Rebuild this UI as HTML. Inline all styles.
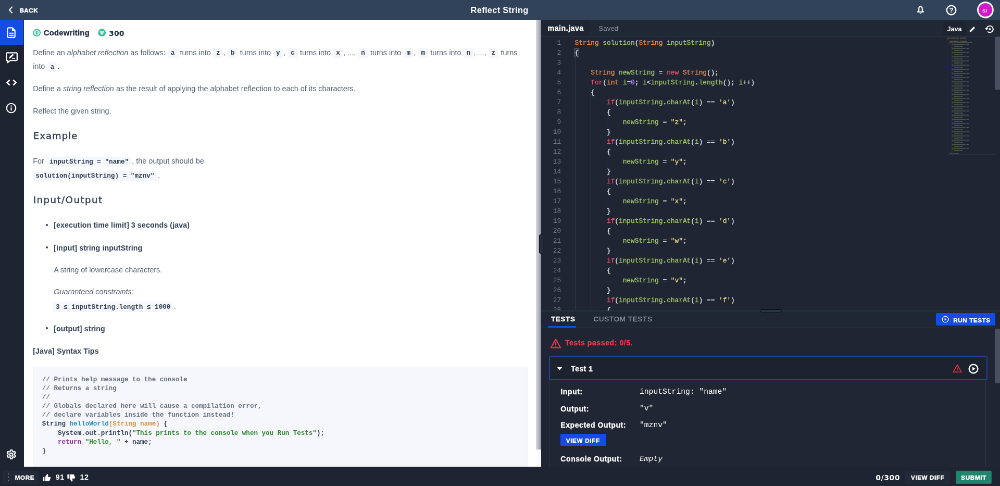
<!DOCTYPE html>
<html lang="en"><head><meta charset="utf-8"><title>Reflect String</title>
<style>
html,body{margin:0;padding:0;width:1000px;height:486px;overflow:hidden;background:#1e2532}
#root{will-change:transform;position:absolute;left:0;top:0;width:1920px;height:933px;transform:scale(0.5208333);transform-origin:0 0;font-family:"Liberation Sans",sans-serif;color:#fff;overflow:hidden;font-size:14.4px}
#root *{box-sizing:border-box}
.t{position:absolute;white-space:pre;line-height:20px;height:20px}
.b{position:absolute;display:block}
.m{font-family:"Liberation Mono",monospace}
.chip{font-family:"Liberation Mono",monospace;font-weight:bold;font-size:12.68px;color:#2f3e53;background:#f5f7fb;border-radius:3px;padding:2.4px 5.2px 1.6px;margin:0 1px}
.ed{position:absolute;white-space:pre;font-family:"Liberation Mono",monospace;font-size:12.8px;line-height:19px;height:19px;color:#dde1e7;-webkit-text-stroke:0.3px}
.ln{position:absolute;font-family:"Liberation Mono",monospace;font-size:12.8px;line-height:19px;height:19px;color:#747d8b;text-align:right;width:40px}
.ty{color:#ee8f4c}.id{color:#a3c86e}.kw{color:#f0506e}.nu{color:#ae81ff}.st{color:#e9d88a}.op{color:#dde1e7}
.cc{color:#6b7380}.ck{color:#8a2f96}.cs{color:#2e8b2e}.cf{color:#2a8fbd}.cp{color:#d9903c}
</style></head><body>
<div id="root">
<div class="b" style="left:46.08px;top:38.02px;width:983.62px;height:857.66px;background:#ffffff;"></div>
<svg class="b" style="left:62.96px;top:55.28px;" width="15.4" height="15.4" viewBox="0 0 24 24"><circle cx="12" cy="12" r="10" fill="#c9f2e3" stroke="#35c39b" stroke-width="3"/><rect x="10.200" y="6" width="3.600" height="12" rx="1.200" fill="#2eb891"/></svg>
<div class="t" style="top:53.22px;font-size:14.8px;left:83.71px;font-weight:bold;color:#232f42;letter-spacing:0.25px;-webkit-text-stroke:0.35px #232f42;">Codewriting</div>
<svg class="b" style="left:187.95px;top:55.28px;" width="15.4" height="15.4" viewBox="0 0 24 24"><circle cx="12" cy="12" r="11.5" fill="#3bbf9f"/><path d="M4.500 7.500h15l-7.500 12z" fill="#f2fdf9"/><path d="M8.800 7.500l3.200 4.800 3.200-4.800" fill="none" stroke="#3bbf9f" stroke-width="1.500"/></svg>
<div class="t" style="top:53.51px;font-size:14px;left:209.09px;font-family:'DejaVu Sans','Liberation Sans',sans-serif;font-weight:bold;color:#232f42;letter-spacing:0.1px;">300</div>
<div class="t" style="top:90.61px;font-size:14.4px;left:63.17px;color:#58626f;">Define an <i>alphabet reflection</i> as follows: <span class="chip">a</span> turns into <span class="chip">z</span>, <span class="chip">b</span> turns into <span class="chip">y</span>, <span class="chip">c</span> turns into <span class="chip">x</span>, ..., <span class="chip">n</span> turns into <span class="chip">m</span>, <span class="chip">m</span> turns into <span class="chip">n</span>, ..., <span class="chip">z</span> turns</div>
<div class="t" style="top:117.01px;font-size:14.4px;left:63.17px;color:#58626f;">into <span class="chip">a</span>.</div>
<div class="t" style="top:159.54px;font-size:14.4px;left:63.17px;color:#58626f;letter-spacing:0.02px;">Define a <i>string reflection</i> as the result of applying the alphabet reflection to each of its characters.</div>
<div class="t" style="top:202.93px;font-size:14.4px;left:63.17px;color:#58626f;">Reflect the given string.</div>
<div class="t" style="top:251.04px;font-size:18px;left:63.74px;font-family:'DejaVu Sans','Liberation Sans',sans-serif;color:#2d3b50;letter-spacing:1.1px;-webkit-text-stroke:0.4px #2d3b50;">Example</div>
<div class="t" style="top:298.93px;font-size:14.4px;left:63.17px;color:#58626f;">For <span class="chip">inputString = "name"</span>, the output should be</div>
<div class="t" style="top:326.77px;font-size:14.4px;left:62.17px;color:#58626f;"><span class="chip">solution(inputString) = "mznv"</span>.</div>
<div class="t" style="top:373.92px;font-size:18px;left:63.74px;font-family:'DejaVu Sans','Liberation Sans',sans-serif;color:#2d3b50;letter-spacing:1.55px;-webkit-text-stroke:0.4px #2d3b50;">Input/Output</div>
<div class="b" style="left:87.55px;top:429.7px;width:4.03px;height:4.03px;background:#2d3b50;border-radius:50%;"></div>
<div class="t" style="top:422.36px;font-size:14.2px;left:103.2px;font-weight:bold;color:#344256;letter-spacing:0.12px;">[execution time limit] 3 seconds (java)</div>
<div class="b" style="left:87.55px;top:472.9px;width:4.03px;height:4.03px;background:#2d3b50;border-radius:50%;"></div>
<div class="t" style="top:465.56px;font-size:14.2px;left:103.2px;font-weight:bold;color:#344256;letter-spacing:0.12px;">[input] string inputString</div>
<div class="t" style="top:507.73px;font-size:14.4px;left:103.2px;color:#58626f;">A string of lowercase characters.</div>
<div class="t" style="top:550.26px;font-size:14.4px;left:103.2px;color:#58626f;"><i>Guaranteed constraints:</i></div>
<div class="t" style="top:577.91px;font-size:14.4px;left:100.76px;color:#58626f;"><span class="chip">3 ≤ inputString.length ≤ 1000</span>.</div>
<div class="b" style="left:87.55px;top:628.42px;width:4.03px;height:4.03px;background:#2d3b50;border-radius:50%;"></div>
<div class="t" style="top:621.08px;font-size:14.2px;left:103.2px;font-weight:bold;color:#344256;letter-spacing:0.12px;">[output] string</div>
<div class="t" style="top:663.8px;font-size:14.2px;left:63.17px;font-weight:bold;color:#344256;letter-spacing:0.12px;">[Java] Syntax Tips</div>
<div class="b" style="left:62.59px;top:704.45px;width:951.55px;height:191.23px;background:#f5f7fc;border:1px solid #eceff6;border-bottom:none;"></div>
<div class="t" style="top:718.66px;font-size:12.55px;left:80.83px;font-family:'Liberation Mono',monospace;font-weight:bold;color:#33415a;"><span class="cc">// Prints help message to the console</span></div>
<div class="t" style="top:735.8px;font-size:12.55px;left:80.83px;font-family:'Liberation Mono',monospace;font-weight:bold;color:#33415a;"><span class="cc">// Returns a string</span></div>
<div class="t" style="top:752.95px;font-size:12.55px;left:80.83px;font-family:'Liberation Mono',monospace;font-weight:bold;color:#33415a;"><span class="cc">//</span></div>
<div class="t" style="top:770.09px;font-size:12.55px;left:80.83px;font-family:'Liberation Mono',monospace;font-weight:bold;color:#33415a;"><span class="cc">// Globals declared here will cause a compilation error,</span></div>
<div class="t" style="top:787.24px;font-size:12.55px;left:80.83px;font-family:'Liberation Mono',monospace;font-weight:bold;color:#33415a;"><span class="cc">// declare variables inside the function instead!</span></div>
<div class="t" style="top:804.38px;font-size:12.55px;left:80.83px;font-family:'Liberation Mono',monospace;font-weight:bold;color:#33415a;">String <span class="cf">helloWorld</span><span class="cp">(String name)</span> {</div>
<div class="t" style="top:821.53px;font-size:12.55px;left:80.83px;font-family:'Liberation Mono',monospace;font-weight:bold;color:#33415a;">    System.out.println(<span class="cs">"This prints to the console when you Run Tests"</span>);</div>
<div class="t" style="top:838.67px;font-size:12.55px;left:80.83px;font-family:'Liberation Mono',monospace;font-weight:bold;color:#33415a;">    <span class="ck">return</span> <span class="cs">"Hello, "</span> + name;</div>
<div class="t" style="top:855.82px;font-size:12.55px;left:80.83px;font-family:'Liberation Mono',monospace;font-weight:bold;color:#33415a;">}</div>
<div class="b" style="left:1038.72px;top:38.02px;width:881.28px;height:559.1px;background:#1f2532;"></div>
<div class="b" style="left:1038.72px;top:38.02px;width:881.28px;height:32.26px;background:#212835;"></div>
<div class="b" style="left:1038.72px;top:38.02px;width:96.38px;height:32.26px;background:#1f2532;border-right:1px solid #2c3544;"></div>
<div class="b" style="left:1038.72px;top:69.89px;width:881.28px;height:1.15px;background:#2d3645;"></div>
<div class="t" style="top:44.41px;font-size:14.2px;left:1051.58px;font-weight:bold;color:#fff;letter-spacing:0.5px;-webkit-text-stroke:0.3px #fff;">main.java</div>
<div class="t" style="top:44.75px;font-size:13.2px;left:1149.31px;color:#8b94a4;letter-spacing:0.1px;">Saved</div>
<div class="b" style="left:1811.14px;top:42.05px;width:43.58px;height:26.3px;background:#1d2430;border-radius:2px;"></div>
<div class="t" style="top:45.54px;font-size:12.6px;left:1818.62px;font-weight:bold;color:#fff;">Java</div>
<svg class="b" style="left:1859.82px;top:48.68px;" width="14" height="14" viewBox="0 0 14 14"><path d="M1.6 12.4l.5-2.900L9.600 2l2.400 2.400-7.500 7.500z" fill="#fff"/></svg>
<svg class="b" style="left:1890.42px;top:46.68px;" width="20" height="18" viewBox="0 0 20 18"><path d="M4.200 9a6.300 6.300 0 1 1 1.900 4.500" fill="none" stroke="#fff" stroke-width="2"/><path d="M0.800 7.200l3.400 3.800 3.400-3.800z" fill="#fff"/><circle cx="10.500" cy="9" r="1.900" fill="#fff"/></svg>
<div class="b" style="left:1038.72px;top:71.04px;width:871.68px;height:526.08px;overflow:hidden">
<div class="b" style="left:64.8px;top:20.5px;width:1px;height:532px;background:#343d4c"></div>
<div class="b" style="left:95.52px;top:96.5px;width:1px;height:456px;background:#343d4c"></div>
<div class="b" style="left:126.24px;top:153.5px;width:1px;height:19px;background:#343d4c"></div>
<div class="b" style="left:126.24px;top:229.5px;width:1px;height:19px;background:#343d4c"></div>
<div class="b" style="left:126.24px;top:305.5px;width:1px;height:19px;background:#343d4c"></div>
<div class="b" style="left:126.24px;top:381.5px;width:1px;height:19px;background:#343d4c"></div>
<div class="b" style="left:126.24px;top:457.5px;width:1px;height:19px;background:#343d4c"></div>
<div class="b" style="left:64.3px;top:21px;width:8.68px;height:18px;border:1px solid #6b7480;background:#2a3240"></div>
<div class="ln" style="left:-1.6px;top:1.5px">1</div>
<div class="ed" style="left:64.8px;top:1.5px"><span class="ty">String</span> <span class="id">solution</span>(<span class="ty">String</span> <span class="id">inputString</span>)</div>
<div class="ln" style="left:-1.6px;top:20.5px">2</div>
<div class="ed" style="left:64.8px;top:20.5px">{</div>
<div class="ln" style="left:-1.6px;top:39.5px">3</div>
<div class="ln" style="left:-1.6px;top:58.5px">4</div>
<div class="ed" style="left:64.8px;top:58.5px">    <span class="ty">String</span> <span class="id">newString</span> <span class="op">=</span> <span class="kw">new</span> <span class="ty">String</span>();</div>
<div class="ln" style="left:-1.6px;top:77.5px">5</div>
<div class="ed" style="left:64.8px;top:77.5px">    <span class="kw">for</span>(<span class="ty">int</span> <span class="id">i</span><span class="op">=</span><span class="nu">0</span>; <span class="id">i</span><span class="op">&lt;</span><span class="id">inputString</span>.<span class="id">length</span>(); <span class="id">i</span><span class="op">++</span>)</div>
<div class="ln" style="left:-1.6px;top:96.5px">6</div>
<div class="ed" style="left:64.8px;top:96.5px">    {</div>
<div class="ln" style="left:-1.6px;top:115.5px">7</div>
<div class="ed" style="left:64.8px;top:115.5px">        <span class="kw">if</span>(<span class="id">inputString</span>.<span class="id">charAt</span>(<span class="id">i</span>) <span class="op">==</span> <span class="st">'a'</span>)</div>
<div class="ln" style="left:-1.6px;top:134.5px">8</div>
<div class="ed" style="left:64.8px;top:134.5px">        {</div>
<div class="ln" style="left:-1.6px;top:153.5px">9</div>
<div class="ed" style="left:64.8px;top:153.5px">            <span class="id">newString</span> <span class="op">=</span> <span class="st">"z"</span>;</div>
<div class="ln" style="left:-1.6px;top:172.5px">10</div>
<div class="ed" style="left:64.8px;top:172.5px">        }</div>
<div class="ln" style="left:-1.6px;top:191.5px">11</div>
<div class="ed" style="left:64.8px;top:191.5px">        <span class="kw">if</span>(<span class="id">inputString</span>.<span class="id">charAt</span>(<span class="id">i</span>) <span class="op">==</span> <span class="st">'b'</span>)</div>
<div class="ln" style="left:-1.6px;top:210.5px">12</div>
<div class="ed" style="left:64.8px;top:210.5px">        {</div>
<div class="ln" style="left:-1.6px;top:229.5px">13</div>
<div class="ed" style="left:64.8px;top:229.5px">            <span class="id">newString</span> <span class="op">=</span> <span class="st">"y"</span>;</div>
<div class="ln" style="left:-1.6px;top:248.5px">14</div>
<div class="ed" style="left:64.8px;top:248.5px">        }</div>
<div class="ln" style="left:-1.6px;top:267.5px">15</div>
<div class="ed" style="left:64.8px;top:267.5px">        <span class="kw">if</span>(<span class="id">inputString</span>.<span class="id">charAt</span>(<span class="id">i</span>) <span class="op">==</span> <span class="st">'c'</span>)</div>
<div class="ln" style="left:-1.6px;top:286.5px">16</div>
<div class="ed" style="left:64.8px;top:286.5px">        {</div>
<div class="ln" style="left:-1.6px;top:305.5px">17</div>
<div class="ed" style="left:64.8px;top:305.5px">            <span class="id">newString</span> <span class="op">=</span> <span class="st">"x"</span>;</div>
<div class="ln" style="left:-1.6px;top:324.5px">18</div>
<div class="ed" style="left:64.8px;top:324.5px">        }</div>
<div class="ln" style="left:-1.6px;top:343.5px">19</div>
<div class="ed" style="left:64.8px;top:343.5px">        <span class="kw">if</span>(<span class="id">inputString</span>.<span class="id">charAt</span>(<span class="id">i</span>) <span class="op">==</span> <span class="st">'d'</span>)</div>
<div class="ln" style="left:-1.6px;top:362.5px">20</div>
<div class="ed" style="left:64.8px;top:362.5px">        {</div>
<div class="ln" style="left:-1.6px;top:381.5px">21</div>
<div class="ed" style="left:64.8px;top:381.5px">            <span class="id">newString</span> <span class="op">=</span> <span class="st">"w"</span>;</div>
<div class="ln" style="left:-1.6px;top:400.5px">22</div>
<div class="ed" style="left:64.8px;top:400.5px">        }</div>
<div class="ln" style="left:-1.6px;top:419.5px">23</div>
<div class="ed" style="left:64.8px;top:419.5px">        <span class="kw">if</span>(<span class="id">inputString</span>.<span class="id">charAt</span>(<span class="id">i</span>) <span class="op">==</span> <span class="st">'e'</span>)</div>
<div class="ln" style="left:-1.6px;top:438.5px">24</div>
<div class="ed" style="left:64.8px;top:438.5px">        {</div>
<div class="ln" style="left:-1.6px;top:457.5px">25</div>
<div class="ed" style="left:64.8px;top:457.5px">            <span class="id">newString</span> <span class="op">=</span> <span class="st">"v"</span>;</div>
<div class="ln" style="left:-1.6px;top:476.5px">26</div>
<div class="ed" style="left:64.8px;top:476.5px">        }</div>
<div class="ln" style="left:-1.6px;top:495.5px">27</div>
<div class="ed" style="left:64.8px;top:495.5px">        <span class="kw">if</span>(<span class="id">inputString</span>.<span class="id">charAt</span>(<span class="id">i</span>) <span class="op">==</span> <span class="st">'f'</span>)</div>
<div class="ln" style="left:-1.6px;top:514.5px">28</div>
<div class="ed" style="left:64.8px;top:514.5px">        {</div>
</div>
<svg class="b" style="left:1818.82px;top:71.62px;opacity:.62" width="60" height="228" viewBox="0 0 60 228"><rect x="0" y="0.4" width="6.24" height="1.3" fill="#b5793f"/><rect x="7.28" y="0.4" width="8.32" height="1.3" fill="#7f9c58"/><rect x="15.6" y="0.4" width="1.04" height="1.3" fill="#8b909a"/><rect x="16.64" y="0.4" width="6.24" height="1.3" fill="#b5793f"/><rect x="23.92" y="0.4" width="11.44" height="1.3" fill="#7f9c58"/><rect x="35.36" y="0.4" width="1.04" height="1.3" fill="#8b909a"/><rect x="0" y="2.4" width="1.04" height="1.3" fill="#8b909a"/><rect x="4.16" y="6.4" width="6.24" height="1.3" fill="#b5793f"/><rect x="11.44" y="6.4" width="9.36" height="1.3" fill="#7f9c58"/><rect x="21.84" y="6.4" width="1.04" height="1.3" fill="#8b909a"/><rect x="23.92" y="6.4" width="3.12" height="1.3" fill="#a8606a"/><rect x="28.08" y="6.4" width="6.24" height="1.3" fill="#b5793f"/><rect x="34.32" y="6.4" width="3.12" height="1.3" fill="#8b909a"/><rect x="4.16" y="8.4" width="3.12" height="1.3" fill="#a8606a"/><rect x="7.28" y="8.4" width="1.04" height="1.3" fill="#8b909a"/><rect x="8.32" y="8.4" width="3.12" height="1.3" fill="#b5793f"/><rect x="12.48" y="8.4" width="1.04" height="1.3" fill="#7f9c58"/><rect x="13.52" y="8.4" width="1.04" height="1.3" fill="#8b909a"/><rect x="14.56" y="8.4" width="1.04" height="1.3" fill="#8c6bd0"/><rect x="15.6" y="8.4" width="1.04" height="1.3" fill="#8b909a"/><rect x="17.68" y="8.4" width="1.04" height="1.3" fill="#7f9c58"/><rect x="18.72" y="8.4" width="1.04" height="1.3" fill="#8b909a"/><rect x="19.76" y="8.4" width="11.44" height="1.3" fill="#7f9c58"/><rect x="31.2" y="8.4" width="1.04" height="1.3" fill="#8b909a"/><rect x="32.24" y="8.4" width="6.24" height="1.3" fill="#7f9c58"/><rect x="38.48" y="8.4" width="3.12" height="1.3" fill="#8b909a"/><rect x="42.64" y="8.4" width="1.04" height="1.3" fill="#7f9c58"/><rect x="43.68" y="8.4" width="2.08" height="1.3" fill="#8b909a"/><rect x="45.76" y="8.4" width="1.04" height="1.3" fill="#8b909a"/><rect x="4.16" y="10.4" width="1.04" height="1.3" fill="#8b909a"/><rect x="8.32" y="12.4" width="2.08" height="1.3" fill="#a8606a"/><rect x="10.4" y="12.4" width="1.04" height="1.3" fill="#8b909a"/><rect x="11.44" y="12.4" width="11.44" height="1.3" fill="#7f9c58"/><rect x="22.88" y="12.4" width="1.04" height="1.3" fill="#8b909a"/><rect x="23.92" y="12.4" width="6.24" height="1.3" fill="#7f9c58"/><rect x="30.16" y="12.4" width="1.04" height="1.3" fill="#8b909a"/><rect x="31.2" y="12.4" width="1.04" height="1.3" fill="#7f9c58"/><rect x="32.24" y="12.4" width="1.04" height="1.3" fill="#8b909a"/><rect x="34.32" y="12.4" width="2.08" height="1.3" fill="#8b909a"/><rect x="37.44" y="12.4" width="3.12" height="1.3" fill="#a89f6a"/><rect x="40.56" y="12.4" width="1.04" height="1.3" fill="#8b909a"/><rect x="8.32" y="14.4" width="1.04" height="1.3" fill="#8b909a"/><rect x="12.48" y="16.4" width="9.36" height="1.3" fill="#7f9c58"/><rect x="22.88" y="16.4" width="1.04" height="1.3" fill="#8b909a"/><rect x="24.96" y="16.4" width="3.12" height="1.3" fill="#a89f6a"/><rect x="28.08" y="16.4" width="1.04" height="1.3" fill="#8b909a"/><rect x="8.32" y="18.4" width="1.04" height="1.3" fill="#8b909a"/><rect x="8.32" y="20.4" width="2.08" height="1.3" fill="#a8606a"/><rect x="10.4" y="20.4" width="1.04" height="1.3" fill="#8b909a"/><rect x="11.44" y="20.4" width="11.44" height="1.3" fill="#7f9c58"/><rect x="22.88" y="20.4" width="1.04" height="1.3" fill="#8b909a"/><rect x="23.92" y="20.4" width="6.24" height="1.3" fill="#7f9c58"/><rect x="30.16" y="20.4" width="1.04" height="1.3" fill="#8b909a"/><rect x="31.2" y="20.4" width="1.04" height="1.3" fill="#7f9c58"/><rect x="32.24" y="20.4" width="1.04" height="1.3" fill="#8b909a"/><rect x="34.32" y="20.4" width="2.08" height="1.3" fill="#8b909a"/><rect x="37.44" y="20.4" width="3.12" height="1.3" fill="#a89f6a"/><rect x="40.56" y="20.4" width="1.04" height="1.3" fill="#8b909a"/><rect x="8.32" y="22.4" width="1.04" height="1.3" fill="#8b909a"/><rect x="12.48" y="24.4" width="9.36" height="1.3" fill="#7f9c58"/><rect x="22.88" y="24.4" width="1.04" height="1.3" fill="#8b909a"/><rect x="24.96" y="24.4" width="3.12" height="1.3" fill="#a89f6a"/><rect x="28.08" y="24.4" width="1.04" height="1.3" fill="#8b909a"/><rect x="8.32" y="26.4" width="1.04" height="1.3" fill="#8b909a"/><rect x="8.32" y="28.4" width="2.08" height="1.3" fill="#a8606a"/><rect x="10.4" y="28.4" width="1.04" height="1.3" fill="#8b909a"/><rect x="11.44" y="28.4" width="11.44" height="1.3" fill="#7f9c58"/><rect x="22.88" y="28.4" width="1.04" height="1.3" fill="#8b909a"/><rect x="23.92" y="28.4" width="6.24" height="1.3" fill="#7f9c58"/><rect x="30.16" y="28.4" width="1.04" height="1.3" fill="#8b909a"/><rect x="31.2" y="28.4" width="1.04" height="1.3" fill="#7f9c58"/><rect x="32.24" y="28.4" width="1.04" height="1.3" fill="#8b909a"/><rect x="34.32" y="28.4" width="2.08" height="1.3" fill="#8b909a"/><rect x="37.44" y="28.4" width="3.12" height="1.3" fill="#a89f6a"/><rect x="40.56" y="28.4" width="1.04" height="1.3" fill="#8b909a"/><rect x="8.32" y="30.4" width="1.04" height="1.3" fill="#8b909a"/><rect x="12.48" y="32.4" width="9.36" height="1.3" fill="#7f9c58"/><rect x="22.88" y="32.4" width="1.04" height="1.3" fill="#8b909a"/><rect x="24.96" y="32.4" width="3.12" height="1.3" fill="#a89f6a"/><rect x="28.08" y="32.4" width="1.04" height="1.3" fill="#8b909a"/><rect x="8.32" y="34.4" width="1.04" height="1.3" fill="#8b909a"/><rect x="8.32" y="36.4" width="2.08" height="1.3" fill="#a8606a"/><rect x="10.4" y="36.4" width="1.04" height="1.3" fill="#8b909a"/><rect x="11.44" y="36.4" width="11.44" height="1.3" fill="#7f9c58"/><rect x="22.88" y="36.4" width="1.04" height="1.3" fill="#8b909a"/><rect x="23.92" y="36.4" width="6.24" height="1.3" fill="#7f9c58"/><rect x="30.16" y="36.4" width="1.04" height="1.3" fill="#8b909a"/><rect x="31.2" y="36.4" width="1.04" height="1.3" fill="#7f9c58"/><rect x="32.24" y="36.4" width="1.04" height="1.3" fill="#8b909a"/><rect x="34.32" y="36.4" width="2.08" height="1.3" fill="#8b909a"/><rect x="37.44" y="36.4" width="3.12" height="1.3" fill="#a89f6a"/><rect x="40.56" y="36.4" width="1.04" height="1.3" fill="#8b909a"/><rect x="8.32" y="38.4" width="1.04" height="1.3" fill="#8b909a"/><rect x="12.48" y="40.4" width="9.36" height="1.3" fill="#7f9c58"/><rect x="22.88" y="40.4" width="1.04" height="1.3" fill="#8b909a"/><rect x="24.96" y="40.4" width="3.12" height="1.3" fill="#a89f6a"/><rect x="28.08" y="40.4" width="1.04" height="1.3" fill="#8b909a"/><rect x="8.32" y="42.4" width="1.04" height="1.3" fill="#8b909a"/><rect x="8.32" y="44.4" width="2.08" height="1.3" fill="#a8606a"/><rect x="10.4" y="44.4" width="1.04" height="1.3" fill="#8b909a"/><rect x="11.44" y="44.4" width="11.44" height="1.3" fill="#7f9c58"/><rect x="22.88" y="44.4" width="1.04" height="1.3" fill="#8b909a"/><rect x="23.92" y="44.4" width="6.24" height="1.3" fill="#7f9c58"/><rect x="30.16" y="44.4" width="1.04" height="1.3" fill="#8b909a"/><rect x="31.2" y="44.4" width="1.04" height="1.3" fill="#7f9c58"/><rect x="32.24" y="44.4" width="1.04" height="1.3" fill="#8b909a"/><rect x="34.32" y="44.4" width="2.08" height="1.3" fill="#8b909a"/><rect x="37.44" y="44.4" width="3.12" height="1.3" fill="#a89f6a"/><rect x="40.56" y="44.4" width="1.04" height="1.3" fill="#8b909a"/><rect x="8.32" y="46.4" width="1.04" height="1.3" fill="#8b909a"/><rect x="12.48" y="48.4" width="9.36" height="1.3" fill="#7f9c58"/><rect x="22.88" y="48.4" width="1.04" height="1.3" fill="#8b909a"/><rect x="24.96" y="48.4" width="3.12" height="1.3" fill="#a89f6a"/><rect x="28.08" y="48.4" width="1.04" height="1.3" fill="#8b909a"/><rect x="8.32" y="50.4" width="1.04" height="1.3" fill="#8b909a"/><rect x="8.32" y="52.4" width="2.08" height="1.3" fill="#a8606a"/><rect x="10.4" y="52.4" width="1.04" height="1.3" fill="#8b909a"/><rect x="11.44" y="52.4" width="11.44" height="1.3" fill="#7f9c58"/><rect x="22.88" y="52.4" width="1.04" height="1.3" fill="#8b909a"/><rect x="23.92" y="52.4" width="6.24" height="1.3" fill="#7f9c58"/><rect x="30.16" y="52.4" width="1.04" height="1.3" fill="#8b909a"/><rect x="31.2" y="52.4" width="1.04" height="1.3" fill="#7f9c58"/><rect x="32.24" y="52.4" width="1.04" height="1.3" fill="#8b909a"/><rect x="34.32" y="52.4" width="2.08" height="1.3" fill="#8b909a"/><rect x="37.44" y="52.4" width="3.12" height="1.3" fill="#a89f6a"/><rect x="40.56" y="52.4" width="1.04" height="1.3" fill="#8b909a"/><rect x="8.32" y="54.4" width="1.04" height="1.3" fill="#8b909a"/><rect x="12.48" y="56.4" width="9.36" height="1.3" fill="#7f9c58"/><rect x="22.88" y="56.4" width="1.04" height="1.3" fill="#8b909a"/><rect x="24.96" y="56.4" width="3.12" height="1.3" fill="#a89f6a"/><rect x="28.08" y="56.4" width="1.04" height="1.3" fill="#8b909a"/><rect x="8.32" y="58.4" width="1.04" height="1.3" fill="#8b909a"/><rect x="8.32" y="60.4" width="2.08" height="1.3" fill="#a8606a"/><rect x="10.4" y="60.4" width="1.04" height="1.3" fill="#8b909a"/><rect x="11.44" y="60.4" width="11.44" height="1.3" fill="#7f9c58"/><rect x="22.88" y="60.4" width="1.04" height="1.3" fill="#8b909a"/><rect x="23.92" y="60.4" width="6.24" height="1.3" fill="#7f9c58"/><rect x="30.16" y="60.4" width="1.04" height="1.3" fill="#8b909a"/><rect x="31.2" y="60.4" width="1.04" height="1.3" fill="#7f9c58"/><rect x="32.24" y="60.4" width="1.04" height="1.3" fill="#8b909a"/><rect x="34.32" y="60.4" width="2.08" height="1.3" fill="#8b909a"/><rect x="37.44" y="60.4" width="3.12" height="1.3" fill="#a89f6a"/><rect x="40.56" y="60.4" width="1.04" height="1.3" fill="#8b909a"/><rect x="8.32" y="62.4" width="1.04" height="1.3" fill="#8b909a"/><rect x="12.48" y="64.4" width="9.36" height="1.3" fill="#7f9c58"/><rect x="22.88" y="64.4" width="1.04" height="1.3" fill="#8b909a"/><rect x="24.96" y="64.4" width="3.12" height="1.3" fill="#a89f6a"/><rect x="28.08" y="64.4" width="1.04" height="1.3" fill="#8b909a"/><rect x="8.32" y="66.4" width="1.04" height="1.3" fill="#8b909a"/><rect x="8.32" y="68.4" width="2.08" height="1.3" fill="#a8606a"/><rect x="10.4" y="68.4" width="1.04" height="1.3" fill="#8b909a"/><rect x="11.44" y="68.4" width="11.44" height="1.3" fill="#7f9c58"/><rect x="22.88" y="68.4" width="1.04" height="1.3" fill="#8b909a"/><rect x="23.92" y="68.4" width="6.24" height="1.3" fill="#7f9c58"/><rect x="30.16" y="68.4" width="1.04" height="1.3" fill="#8b909a"/><rect x="31.2" y="68.4" width="1.04" height="1.3" fill="#7f9c58"/><rect x="32.24" y="68.4" width="1.04" height="1.3" fill="#8b909a"/><rect x="34.32" y="68.4" width="2.08" height="1.3" fill="#8b909a"/><rect x="37.44" y="68.4" width="3.12" height="1.3" fill="#a89f6a"/><rect x="40.56" y="68.4" width="1.04" height="1.3" fill="#8b909a"/><rect x="8.32" y="70.4" width="1.04" height="1.3" fill="#8b909a"/><rect x="12.48" y="72.4" width="9.36" height="1.3" fill="#7f9c58"/><rect x="22.88" y="72.4" width="1.04" height="1.3" fill="#8b909a"/><rect x="24.96" y="72.4" width="3.12" height="1.3" fill="#a89f6a"/><rect x="28.08" y="72.4" width="1.04" height="1.3" fill="#8b909a"/><rect x="8.32" y="74.4" width="1.04" height="1.3" fill="#8b909a"/><rect x="8.32" y="76.4" width="2.08" height="1.3" fill="#a8606a"/><rect x="10.4" y="76.4" width="1.04" height="1.3" fill="#8b909a"/><rect x="11.44" y="76.4" width="11.44" height="1.3" fill="#7f9c58"/><rect x="22.88" y="76.4" width="1.04" height="1.3" fill="#8b909a"/><rect x="23.92" y="76.4" width="6.24" height="1.3" fill="#7f9c58"/><rect x="30.16" y="76.4" width="1.04" height="1.3" fill="#8b909a"/><rect x="31.2" y="76.4" width="1.04" height="1.3" fill="#7f9c58"/><rect x="32.24" y="76.4" width="1.04" height="1.3" fill="#8b909a"/><rect x="34.32" y="76.4" width="2.08" height="1.3" fill="#8b909a"/><rect x="37.44" y="76.4" width="3.12" height="1.3" fill="#a89f6a"/><rect x="40.56" y="76.4" width="1.04" height="1.3" fill="#8b909a"/><rect x="8.32" y="78.4" width="1.04" height="1.3" fill="#8b909a"/><rect x="12.48" y="80.4" width="9.36" height="1.3" fill="#7f9c58"/><rect x="22.88" y="80.4" width="1.04" height="1.3" fill="#8b909a"/><rect x="24.96" y="80.4" width="3.12" height="1.3" fill="#a89f6a"/><rect x="28.08" y="80.4" width="1.04" height="1.3" fill="#8b909a"/><rect x="8.32" y="82.4" width="1.04" height="1.3" fill="#8b909a"/><rect x="8.32" y="84.4" width="2.08" height="1.3" fill="#a8606a"/><rect x="10.4" y="84.4" width="1.04" height="1.3" fill="#8b909a"/><rect x="11.44" y="84.4" width="11.44" height="1.3" fill="#7f9c58"/><rect x="22.88" y="84.4" width="1.04" height="1.3" fill="#8b909a"/><rect x="23.92" y="84.4" width="6.24" height="1.3" fill="#7f9c58"/><rect x="30.16" y="84.4" width="1.04" height="1.3" fill="#8b909a"/><rect x="31.2" y="84.4" width="1.04" height="1.3" fill="#7f9c58"/><rect x="32.24" y="84.4" width="1.04" height="1.3" fill="#8b909a"/><rect x="34.32" y="84.4" width="2.08" height="1.3" fill="#8b909a"/><rect x="37.44" y="84.4" width="3.12" height="1.3" fill="#a89f6a"/><rect x="40.56" y="84.4" width="1.04" height="1.3" fill="#8b909a"/><rect x="8.32" y="86.4" width="1.04" height="1.3" fill="#8b909a"/><rect x="12.48" y="88.4" width="9.36" height="1.3" fill="#7f9c58"/><rect x="22.88" y="88.4" width="1.04" height="1.3" fill="#8b909a"/><rect x="24.96" y="88.4" width="3.12" height="1.3" fill="#a89f6a"/><rect x="28.08" y="88.4" width="1.04" height="1.3" fill="#8b909a"/><rect x="8.32" y="90.4" width="1.04" height="1.3" fill="#8b909a"/><rect x="8.32" y="92.4" width="2.08" height="1.3" fill="#a8606a"/><rect x="10.4" y="92.4" width="1.04" height="1.3" fill="#8b909a"/><rect x="11.44" y="92.4" width="11.44" height="1.3" fill="#7f9c58"/><rect x="22.88" y="92.4" width="1.04" height="1.3" fill="#8b909a"/><rect x="23.92" y="92.4" width="6.24" height="1.3" fill="#7f9c58"/><rect x="30.16" y="92.4" width="1.04" height="1.3" fill="#8b909a"/><rect x="31.2" y="92.4" width="1.04" height="1.3" fill="#7f9c58"/><rect x="32.24" y="92.4" width="1.04" height="1.3" fill="#8b909a"/><rect x="34.32" y="92.4" width="2.08" height="1.3" fill="#8b909a"/><rect x="37.44" y="92.4" width="3.12" height="1.3" fill="#a89f6a"/><rect x="40.56" y="92.4" width="1.04" height="1.3" fill="#8b909a"/><rect x="8.32" y="94.4" width="1.04" height="1.3" fill="#8b909a"/><rect x="12.48" y="96.4" width="9.36" height="1.3" fill="#7f9c58"/><rect x="22.88" y="96.4" width="1.04" height="1.3" fill="#8b909a"/><rect x="24.96" y="96.4" width="3.12" height="1.3" fill="#a89f6a"/><rect x="28.08" y="96.4" width="1.04" height="1.3" fill="#8b909a"/><rect x="8.32" y="98.4" width="1.04" height="1.3" fill="#8b909a"/><rect x="8.32" y="100.4" width="2.08" height="1.3" fill="#a8606a"/><rect x="10.4" y="100.4" width="1.04" height="1.3" fill="#8b909a"/><rect x="11.44" y="100.4" width="11.44" height="1.3" fill="#7f9c58"/><rect x="22.88" y="100.4" width="1.04" height="1.3" fill="#8b909a"/><rect x="23.92" y="100.4" width="6.24" height="1.3" fill="#7f9c58"/><rect x="30.16" y="100.4" width="1.04" height="1.3" fill="#8b909a"/><rect x="31.2" y="100.4" width="1.04" height="1.3" fill="#7f9c58"/><rect x="32.24" y="100.4" width="1.04" height="1.3" fill="#8b909a"/><rect x="34.32" y="100.4" width="2.08" height="1.3" fill="#8b909a"/><rect x="37.44" y="100.4" width="3.12" height="1.3" fill="#a89f6a"/><rect x="40.56" y="100.4" width="1.04" height="1.3" fill="#8b909a"/><rect x="8.32" y="102.4" width="1.04" height="1.3" fill="#8b909a"/><rect x="12.48" y="104.4" width="9.36" height="1.3" fill="#7f9c58"/><rect x="22.88" y="104.4" width="1.04" height="1.3" fill="#8b909a"/><rect x="24.96" y="104.4" width="3.12" height="1.3" fill="#a89f6a"/><rect x="28.08" y="104.4" width="1.04" height="1.3" fill="#8b909a"/><rect x="8.32" y="106.4" width="1.04" height="1.3" fill="#8b909a"/><rect x="8.32" y="108.4" width="2.08" height="1.3" fill="#a8606a"/><rect x="10.4" y="108.4" width="1.04" height="1.3" fill="#8b909a"/><rect x="11.44" y="108.4" width="11.44" height="1.3" fill="#7f9c58"/><rect x="22.88" y="108.4" width="1.04" height="1.3" fill="#8b909a"/><rect x="23.92" y="108.4" width="6.24" height="1.3" fill="#7f9c58"/><rect x="30.16" y="108.4" width="1.04" height="1.3" fill="#8b909a"/><rect x="31.2" y="108.4" width="1.04" height="1.3" fill="#7f9c58"/><rect x="32.24" y="108.4" width="1.04" height="1.3" fill="#8b909a"/><rect x="34.32" y="108.4" width="2.08" height="1.3" fill="#8b909a"/><rect x="37.44" y="108.4" width="3.12" height="1.3" fill="#a89f6a"/><rect x="40.56" y="108.4" width="1.04" height="1.3" fill="#8b909a"/><rect x="8.32" y="110.4" width="1.04" height="1.3" fill="#8b909a"/><rect x="12.48" y="112.4" width="9.36" height="1.3" fill="#7f9c58"/><rect x="22.88" y="112.4" width="1.04" height="1.3" fill="#8b909a"/><rect x="24.96" y="112.4" width="3.12" height="1.3" fill="#a89f6a"/><rect x="28.08" y="112.4" width="1.04" height="1.3" fill="#8b909a"/><rect x="8.32" y="114.4" width="1.04" height="1.3" fill="#8b909a"/><rect x="8.32" y="116.4" width="2.08" height="1.3" fill="#a8606a"/><rect x="10.4" y="116.4" width="1.04" height="1.3" fill="#8b909a"/><rect x="11.44" y="116.4" width="11.44" height="1.3" fill="#7f9c58"/><rect x="22.88" y="116.4" width="1.04" height="1.3" fill="#8b909a"/><rect x="23.92" y="116.4" width="6.24" height="1.3" fill="#7f9c58"/><rect x="30.16" y="116.4" width="1.04" height="1.3" fill="#8b909a"/><rect x="31.2" y="116.4" width="1.04" height="1.3" fill="#7f9c58"/><rect x="32.24" y="116.4" width="1.04" height="1.3" fill="#8b909a"/><rect x="34.32" y="116.4" width="2.08" height="1.3" fill="#8b909a"/><rect x="37.44" y="116.4" width="3.12" height="1.3" fill="#a89f6a"/><rect x="40.56" y="116.4" width="1.04" height="1.3" fill="#8b909a"/><rect x="8.32" y="118.4" width="1.04" height="1.3" fill="#8b909a"/><rect x="12.48" y="120.4" width="9.36" height="1.3" fill="#7f9c58"/><rect x="22.88" y="120.4" width="1.04" height="1.3" fill="#8b909a"/><rect x="24.96" y="120.4" width="3.12" height="1.3" fill="#a89f6a"/><rect x="28.08" y="120.4" width="1.04" height="1.3" fill="#8b909a"/><rect x="8.32" y="122.4" width="1.04" height="1.3" fill="#8b909a"/><rect x="8.32" y="124.4" width="2.08" height="1.3" fill="#a8606a"/><rect x="10.4" y="124.4" width="1.04" height="1.3" fill="#8b909a"/><rect x="11.44" y="124.4" width="11.44" height="1.3" fill="#7f9c58"/><rect x="22.88" y="124.4" width="1.04" height="1.3" fill="#8b909a"/><rect x="23.92" y="124.4" width="6.24" height="1.3" fill="#7f9c58"/><rect x="30.16" y="124.4" width="1.04" height="1.3" fill="#8b909a"/><rect x="31.2" y="124.4" width="1.04" height="1.3" fill="#7f9c58"/><rect x="32.24" y="124.4" width="1.04" height="1.3" fill="#8b909a"/><rect x="34.32" y="124.4" width="2.08" height="1.3" fill="#8b909a"/><rect x="37.44" y="124.4" width="3.12" height="1.3" fill="#a89f6a"/><rect x="40.56" y="124.4" width="1.04" height="1.3" fill="#8b909a"/><rect x="8.32" y="126.4" width="1.04" height="1.3" fill="#8b909a"/><rect x="12.48" y="128.4" width="9.36" height="1.3" fill="#7f9c58"/><rect x="22.88" y="128.4" width="1.04" height="1.3" fill="#8b909a"/><rect x="24.96" y="128.4" width="3.12" height="1.3" fill="#a89f6a"/><rect x="28.08" y="128.4" width="1.04" height="1.3" fill="#8b909a"/><rect x="8.32" y="130.4" width="1.04" height="1.3" fill="#8b909a"/><rect x="8.32" y="132.4" width="2.08" height="1.3" fill="#a8606a"/><rect x="10.4" y="132.4" width="1.04" height="1.3" fill="#8b909a"/><rect x="11.44" y="132.4" width="11.44" height="1.3" fill="#7f9c58"/><rect x="22.88" y="132.4" width="1.04" height="1.3" fill="#8b909a"/><rect x="23.92" y="132.4" width="6.24" height="1.3" fill="#7f9c58"/><rect x="30.16" y="132.4" width="1.04" height="1.3" fill="#8b909a"/><rect x="31.2" y="132.4" width="1.04" height="1.3" fill="#7f9c58"/><rect x="32.24" y="132.4" width="1.04" height="1.3" fill="#8b909a"/><rect x="34.32" y="132.4" width="2.08" height="1.3" fill="#8b909a"/><rect x="37.44" y="132.4" width="3.12" height="1.3" fill="#a89f6a"/><rect x="40.56" y="132.4" width="1.04" height="1.3" fill="#8b909a"/><rect x="8.32" y="134.4" width="1.04" height="1.3" fill="#8b909a"/><rect x="12.48" y="136.4" width="9.36" height="1.3" fill="#7f9c58"/><rect x="22.88" y="136.4" width="1.04" height="1.3" fill="#8b909a"/><rect x="24.96" y="136.4" width="3.12" height="1.3" fill="#a89f6a"/><rect x="28.08" y="136.4" width="1.04" height="1.3" fill="#8b909a"/><rect x="8.32" y="138.4" width="1.04" height="1.3" fill="#8b909a"/><rect x="8.32" y="140.4" width="2.08" height="1.3" fill="#a8606a"/><rect x="10.4" y="140.4" width="1.04" height="1.3" fill="#8b909a"/><rect x="11.44" y="140.4" width="11.44" height="1.3" fill="#7f9c58"/><rect x="22.88" y="140.4" width="1.04" height="1.3" fill="#8b909a"/><rect x="23.92" y="140.4" width="6.24" height="1.3" fill="#7f9c58"/><rect x="30.16" y="140.4" width="1.04" height="1.3" fill="#8b909a"/><rect x="31.2" y="140.4" width="1.04" height="1.3" fill="#7f9c58"/><rect x="32.24" y="140.4" width="1.04" height="1.3" fill="#8b909a"/><rect x="34.32" y="140.4" width="2.08" height="1.3" fill="#8b909a"/><rect x="37.44" y="140.4" width="3.12" height="1.3" fill="#a89f6a"/><rect x="40.56" y="140.4" width="1.04" height="1.3" fill="#8b909a"/><rect x="8.32" y="142.4" width="1.04" height="1.3" fill="#8b909a"/><rect x="12.48" y="144.4" width="9.36" height="1.3" fill="#7f9c58"/><rect x="22.88" y="144.4" width="1.04" height="1.3" fill="#8b909a"/><rect x="24.96" y="144.4" width="3.12" height="1.3" fill="#a89f6a"/><rect x="28.08" y="144.4" width="1.04" height="1.3" fill="#8b909a"/><rect x="8.32" y="146.4" width="1.04" height="1.3" fill="#8b909a"/><rect x="8.32" y="148.4" width="2.08" height="1.3" fill="#a8606a"/><rect x="10.4" y="148.4" width="1.04" height="1.3" fill="#8b909a"/><rect x="11.44" y="148.4" width="11.44" height="1.3" fill="#7f9c58"/><rect x="22.88" y="148.4" width="1.04" height="1.3" fill="#8b909a"/><rect x="23.92" y="148.4" width="6.24" height="1.3" fill="#7f9c58"/><rect x="30.16" y="148.4" width="1.04" height="1.3" fill="#8b909a"/><rect x="31.2" y="148.4" width="1.04" height="1.3" fill="#7f9c58"/><rect x="32.24" y="148.4" width="1.04" height="1.3" fill="#8b909a"/><rect x="34.32" y="148.4" width="2.08" height="1.3" fill="#8b909a"/><rect x="37.44" y="148.4" width="3.12" height="1.3" fill="#a89f6a"/><rect x="40.56" y="148.4" width="1.04" height="1.3" fill="#8b909a"/><rect x="8.32" y="150.4" width="1.04" height="1.3" fill="#8b909a"/><rect x="12.48" y="152.4" width="9.36" height="1.3" fill="#7f9c58"/><rect x="22.88" y="152.4" width="1.04" height="1.3" fill="#8b909a"/><rect x="24.96" y="152.4" width="3.12" height="1.3" fill="#a89f6a"/><rect x="28.08" y="152.4" width="1.04" height="1.3" fill="#8b909a"/><rect x="8.32" y="154.4" width="1.04" height="1.3" fill="#8b909a"/><rect x="8.32" y="156.4" width="2.08" height="1.3" fill="#a8606a"/><rect x="10.4" y="156.4" width="1.04" height="1.3" fill="#8b909a"/><rect x="11.44" y="156.4" width="11.44" height="1.3" fill="#7f9c58"/><rect x="22.88" y="156.4" width="1.04" height="1.3" fill="#8b909a"/><rect x="23.92" y="156.4" width="6.24" height="1.3" fill="#7f9c58"/><rect x="30.16" y="156.4" width="1.04" height="1.3" fill="#8b909a"/><rect x="31.2" y="156.4" width="1.04" height="1.3" fill="#7f9c58"/><rect x="32.24" y="156.4" width="1.04" height="1.3" fill="#8b909a"/><rect x="34.32" y="156.4" width="2.08" height="1.3" fill="#8b909a"/><rect x="37.44" y="156.4" width="3.12" height="1.3" fill="#a89f6a"/><rect x="40.56" y="156.4" width="1.04" height="1.3" fill="#8b909a"/><rect x="8.32" y="158.4" width="1.04" height="1.3" fill="#8b909a"/><rect x="12.48" y="160.4" width="9.36" height="1.3" fill="#7f9c58"/><rect x="22.88" y="160.4" width="1.04" height="1.3" fill="#8b909a"/><rect x="24.96" y="160.4" width="3.12" height="1.3" fill="#a89f6a"/><rect x="28.08" y="160.4" width="1.04" height="1.3" fill="#8b909a"/><rect x="8.32" y="162.4" width="1.04" height="1.3" fill="#8b909a"/><rect x="8.32" y="164.4" width="2.08" height="1.3" fill="#a8606a"/><rect x="10.4" y="164.4" width="1.04" height="1.3" fill="#8b909a"/><rect x="11.44" y="164.4" width="11.44" height="1.3" fill="#7f9c58"/><rect x="22.88" y="164.4" width="1.04" height="1.3" fill="#8b909a"/><rect x="23.92" y="164.4" width="6.24" height="1.3" fill="#7f9c58"/><rect x="30.16" y="164.4" width="1.04" height="1.3" fill="#8b909a"/><rect x="31.2" y="164.4" width="1.04" height="1.3" fill="#7f9c58"/><rect x="32.24" y="164.4" width="1.04" height="1.3" fill="#8b909a"/><rect x="34.32" y="164.4" width="2.08" height="1.3" fill="#8b909a"/><rect x="37.44" y="164.4" width="3.12" height="1.3" fill="#a89f6a"/><rect x="40.56" y="164.4" width="1.04" height="1.3" fill="#8b909a"/><rect x="8.32" y="166.4" width="1.04" height="1.3" fill="#8b909a"/><rect x="12.48" y="168.4" width="9.36" height="1.3" fill="#7f9c58"/><rect x="22.88" y="168.4" width="1.04" height="1.3" fill="#8b909a"/><rect x="24.96" y="168.4" width="3.12" height="1.3" fill="#a89f6a"/><rect x="28.08" y="168.4" width="1.04" height="1.3" fill="#8b909a"/><rect x="8.32" y="170.4" width="1.04" height="1.3" fill="#8b909a"/><rect x="8.32" y="172.4" width="2.08" height="1.3" fill="#a8606a"/><rect x="10.4" y="172.4" width="1.04" height="1.3" fill="#8b909a"/><rect x="11.44" y="172.4" width="11.44" height="1.3" fill="#7f9c58"/><rect x="22.88" y="172.4" width="1.04" height="1.3" fill="#8b909a"/><rect x="23.92" y="172.4" width="6.24" height="1.3" fill="#7f9c58"/><rect x="30.16" y="172.4" width="1.04" height="1.3" fill="#8b909a"/><rect x="31.2" y="172.4" width="1.04" height="1.3" fill="#7f9c58"/><rect x="32.24" y="172.4" width="1.04" height="1.3" fill="#8b909a"/><rect x="34.32" y="172.4" width="2.08" height="1.3" fill="#8b909a"/><rect x="37.44" y="172.4" width="3.12" height="1.3" fill="#a89f6a"/><rect x="40.56" y="172.4" width="1.04" height="1.3" fill="#8b909a"/><rect x="8.32" y="174.4" width="1.04" height="1.3" fill="#8b909a"/><rect x="12.48" y="176.4" width="9.36" height="1.3" fill="#7f9c58"/><rect x="22.88" y="176.4" width="1.04" height="1.3" fill="#8b909a"/><rect x="24.96" y="176.4" width="3.12" height="1.3" fill="#a89f6a"/><rect x="28.08" y="176.4" width="1.04" height="1.3" fill="#8b909a"/><rect x="8.32" y="178.4" width="1.04" height="1.3" fill="#8b909a"/><rect x="8.32" y="180.4" width="2.08" height="1.3" fill="#a8606a"/><rect x="10.4" y="180.4" width="1.04" height="1.3" fill="#8b909a"/><rect x="11.44" y="180.4" width="11.44" height="1.3" fill="#7f9c58"/><rect x="22.88" y="180.4" width="1.04" height="1.3" fill="#8b909a"/><rect x="23.92" y="180.4" width="6.24" height="1.3" fill="#7f9c58"/><rect x="30.16" y="180.4" width="1.04" height="1.3" fill="#8b909a"/><rect x="31.2" y="180.4" width="1.04" height="1.3" fill="#7f9c58"/><rect x="32.24" y="180.4" width="1.04" height="1.3" fill="#8b909a"/><rect x="34.32" y="180.4" width="2.08" height="1.3" fill="#8b909a"/><rect x="37.44" y="180.4" width="3.12" height="1.3" fill="#a89f6a"/><rect x="40.56" y="180.4" width="1.04" height="1.3" fill="#8b909a"/><rect x="8.32" y="182.4" width="1.04" height="1.3" fill="#8b909a"/><rect x="12.48" y="184.4" width="9.36" height="1.3" fill="#7f9c58"/><rect x="22.88" y="184.4" width="1.04" height="1.3" fill="#8b909a"/><rect x="24.96" y="184.4" width="3.12" height="1.3" fill="#a89f6a"/><rect x="28.08" y="184.4" width="1.04" height="1.3" fill="#8b909a"/><rect x="8.32" y="186.4" width="1.04" height="1.3" fill="#8b909a"/><rect x="8.32" y="188.4" width="2.08" height="1.3" fill="#a8606a"/><rect x="10.4" y="188.4" width="1.04" height="1.3" fill="#8b909a"/><rect x="11.44" y="188.4" width="11.44" height="1.3" fill="#7f9c58"/><rect x="22.88" y="188.4" width="1.04" height="1.3" fill="#8b909a"/><rect x="23.92" y="188.4" width="6.24" height="1.3" fill="#7f9c58"/><rect x="30.16" y="188.4" width="1.04" height="1.3" fill="#8b909a"/><rect x="31.2" y="188.4" width="1.04" height="1.3" fill="#7f9c58"/><rect x="32.24" y="188.4" width="1.04" height="1.3" fill="#8b909a"/><rect x="34.32" y="188.4" width="2.08" height="1.3" fill="#8b909a"/><rect x="37.44" y="188.4" width="3.12" height="1.3" fill="#a89f6a"/><rect x="40.56" y="188.4" width="1.04" height="1.3" fill="#8b909a"/><rect x="8.32" y="190.4" width="1.04" height="1.3" fill="#8b909a"/><rect x="12.48" y="192.4" width="9.36" height="1.3" fill="#7f9c58"/><rect x="22.88" y="192.4" width="1.04" height="1.3" fill="#8b909a"/><rect x="24.96" y="192.4" width="3.12" height="1.3" fill="#a89f6a"/><rect x="28.08" y="192.4" width="1.04" height="1.3" fill="#8b909a"/><rect x="8.32" y="194.4" width="1.04" height="1.3" fill="#8b909a"/><rect x="8.32" y="196.4" width="2.08" height="1.3" fill="#a8606a"/><rect x="10.4" y="196.4" width="1.04" height="1.3" fill="#8b909a"/><rect x="11.44" y="196.4" width="11.44" height="1.3" fill="#7f9c58"/><rect x="22.88" y="196.4" width="1.04" height="1.3" fill="#8b909a"/><rect x="23.92" y="196.4" width="6.24" height="1.3" fill="#7f9c58"/><rect x="30.16" y="196.4" width="1.04" height="1.3" fill="#8b909a"/><rect x="31.2" y="196.4" width="1.04" height="1.3" fill="#7f9c58"/><rect x="32.24" y="196.4" width="1.04" height="1.3" fill="#8b909a"/><rect x="34.32" y="196.4" width="2.08" height="1.3" fill="#8b909a"/><rect x="37.44" y="196.4" width="3.12" height="1.3" fill="#a89f6a"/><rect x="40.56" y="196.4" width="1.04" height="1.3" fill="#8b909a"/><rect x="8.32" y="198.4" width="1.04" height="1.3" fill="#8b909a"/><rect x="12.48" y="200.4" width="9.36" height="1.3" fill="#7f9c58"/><rect x="22.88" y="200.4" width="1.04" height="1.3" fill="#8b909a"/><rect x="24.96" y="200.4" width="3.12" height="1.3" fill="#a89f6a"/><rect x="28.08" y="200.4" width="1.04" height="1.3" fill="#8b909a"/><rect x="8.32" y="202.4" width="1.04" height="1.3" fill="#8b909a"/><rect x="8.32" y="204.4" width="2.08" height="1.3" fill="#a8606a"/><rect x="10.4" y="204.4" width="1.04" height="1.3" fill="#8b909a"/><rect x="11.44" y="204.4" width="11.44" height="1.3" fill="#7f9c58"/><rect x="22.88" y="204.4" width="1.04" height="1.3" fill="#8b909a"/><rect x="23.92" y="204.4" width="6.24" height="1.3" fill="#7f9c58"/><rect x="30.16" y="204.4" width="1.04" height="1.3" fill="#8b909a"/><rect x="31.2" y="204.4" width="1.04" height="1.3" fill="#7f9c58"/><rect x="32.24" y="204.4" width="1.04" height="1.3" fill="#8b909a"/><rect x="34.32" y="204.4" width="2.08" height="1.3" fill="#8b909a"/><rect x="37.44" y="204.4" width="3.12" height="1.3" fill="#a89f6a"/><rect x="40.56" y="204.4" width="1.04" height="1.3" fill="#8b909a"/><rect x="8.32" y="206.4" width="1.04" height="1.3" fill="#8b909a"/><rect x="12.48" y="208.4" width="9.36" height="1.3" fill="#7f9c58"/><rect x="22.88" y="208.4" width="1.04" height="1.3" fill="#8b909a"/><rect x="24.96" y="208.4" width="3.12" height="1.3" fill="#a89f6a"/><rect x="28.08" y="208.4" width="1.04" height="1.3" fill="#8b909a"/><rect x="8.32" y="210.4" width="1.04" height="1.3" fill="#8b909a"/><rect x="8.32" y="212.4" width="2.08" height="1.3" fill="#a8606a"/><rect x="10.4" y="212.4" width="1.04" height="1.3" fill="#8b909a"/><rect x="11.44" y="212.4" width="11.44" height="1.3" fill="#7f9c58"/><rect x="22.88" y="212.4" width="1.04" height="1.3" fill="#8b909a"/><rect x="23.92" y="212.4" width="6.24" height="1.3" fill="#7f9c58"/><rect x="30.16" y="212.4" width="1.04" height="1.3" fill="#8b909a"/><rect x="31.2" y="212.4" width="1.04" height="1.3" fill="#7f9c58"/><rect x="32.24" y="212.4" width="1.04" height="1.3" fill="#8b909a"/><rect x="34.32" y="212.4" width="2.08" height="1.3" fill="#8b909a"/><rect x="37.44" y="212.4" width="3.12" height="1.3" fill="#a89f6a"/><rect x="40.56" y="212.4" width="1.04" height="1.3" fill="#8b909a"/><rect x="8.32" y="214.4" width="1.04" height="1.3" fill="#8b909a"/><rect x="12.48" y="216.4" width="9.36" height="1.3" fill="#7f9c58"/><rect x="22.88" y="216.4" width="1.04" height="1.3" fill="#8b909a"/><rect x="24.96" y="216.4" width="3.12" height="1.3" fill="#a89f6a"/><rect x="28.08" y="216.4" width="1.04" height="1.3" fill="#8b909a"/><rect x="8.32" y="218.4" width="1.04" height="1.3" fill="#8b909a"/><rect x="4.16" y="220.4" width="1.04" height="1.3" fill="#8b909a"/><rect x="4.16" y="222.4" width="6.24" height="1.3" fill="#a8606a"/><rect x="11.44" y="222.4" width="9.36" height="1.3" fill="#7f9c58"/><rect x="20.8" y="222.4" width="1.04" height="1.3" fill="#8b909a"/><rect x="0" y="224.4" width="1.04" height="1.3" fill="#8b909a"/></svg>
<div class="b" style="left:1910.4px;top:71.04px;width:9.6px;height:101.38px;background:#485060;"></div>
<div class="b" style="left:1818.24px;top:296.06px;width:91.39px;height:1.15px;background:#2a3341;"></div>
<div class="b" style="left:1038.72px;top:595.97px;width:881.28px;height:299.71px;background:#1f2532;"></div>
<div class="b" style="left:1038.72px;top:595.97px;width:869.76px;height:33.02px;background:#202734;"></div>
<div class="b" style="left:1038.72px;top:596.35px;width:881.28px;height:1.54px;background:#2b3443;"></div>
<div class="b" style="left:1460.16px;top:594.24px;width:41.28px;height:5.76px;background:#2a3340;border:1.6px solid #0e1219;border-radius:3px;"></div>
<div class="b" style="left:1038.72px;top:628.99px;width:869.76px;height:1.15px;background:#2d3645;"></div>
<div class="t" style="top:603.4px;font-size:13.4px;left:1057.92px;font-weight:bold;color:#fff;letter-spacing:0.7px;-webkit-text-stroke:0.35px #fff;">TESTS</div>
<div class="b" style="left:1051.78px;top:625.92px;width:54.72px;height:2.69px;background:#144de4;"></div>
<div class="t" style="top:603.4px;font-size:13.4px;left:1139.52px;color:#8e97a8;letter-spacing:0.72px;-webkit-text-stroke:0.3px #8e97a8;">CUSTOM TESTS</div>
<div class="b" style="left:1796.74px;top:601.34px;width:114.24px;height:23.81px;background:#144de4;border-radius:2px;"></div>
<svg class="b" style="left:1807.78px;top:606.25px;" width="14" height="14" viewBox="0 0 24 24"><circle cx="12" cy="12" r="10" fill="none" stroke="#fff" stroke-width="2.4"/><path d="M9.800 7.600l6.600 4.400-6.600 4.400z" fill="#fff"/></svg>
<div class="t" style="top:605.37px;font-size:11.6px;left:1830.34px;font-weight:bold;color:#fff;letter-spacing:0.62px;-webkit-text-stroke:0.4px #fff;">RUN TESTS</div>
<div class="b" style="left:1907.71px;top:630.14px;width:1.15px;height:265.54px;background:#2b3443;"></div>
<div class="b" style="left:1909.63px;top:630.53px;width:10.37px;height:105.22px;background:#485060;"></div>
<svg class="b" style="left:1055.75px;top:648.94px;" width="22" height="20" viewBox="0 0 24 22"><path d="M12 2.600L22 20.400H2z" fill="none" stroke="#f2354e" stroke-width="2.300" stroke-linejoin="round"/><path d="M12 9v5.600" stroke="#f2354e" stroke-width="2.200"/><circle cx="12" cy="17.300" r="1.250" fill="#f2354e"/></svg>
<div class="t" style="top:647.55px;font-size:14px;left:1084.8px;font-weight:bold;color:#f2354e;letter-spacing:0.6px;-webkit-text-stroke:0.3px #f2354e;">Tests passed: 0/5.</div>
<div class="b" style="left:1054.46px;top:684.29px;width:841.73px;height:45.31px;background:#1d232e;border:2px solid #27409f;border-radius:2px;"></div>
<svg class="b" style="left:1068.93px;top:704.21px;" width="11" height="7" viewBox="0 0 11 7"><path d="M0.500 0.800h10l-5 5.600z" fill="#fff"/></svg>
<div class="t" style="top:698.43px;font-size:14px;left:1096.32px;font-weight:bold;color:#fff;letter-spacing:0.4px;-webkit-text-stroke:0.3px #fff;">Test 1</div>
<svg class="b" style="left:1827.82px;top:698.33px;" width="20" height="18" viewBox="0 0 24 22"><path d="M12 3L21.500 20H2.500z" fill="none" stroke="#d8343f" stroke-width="2.200" stroke-linejoin="round"/><path d="M12 9.500v5" stroke="#d8343f" stroke-width="2"/><circle cx="12" cy="17" r="1.100" fill="#d8343f"/></svg>
<svg class="b" style="left:1858.93px;top:697.71px;" width="20" height="20" viewBox="0 0 24 24"><circle cx="12" cy="12" r="10" fill="none" stroke="#fff" stroke-width="2.900"/><path d="M9.600 7.400l7 4.600-7 4.600z" fill="#fff"/></svg>
<div class="b" style="left:1054.46px;top:729.6px;width:839.04px;height:166.08px;background:#202633;border-left:1px solid #2f3848;border-right:1px solid #2f3848;"></div>
<div class="t" style="top:742.4px;font-size:14px;left:1076.35px;font-weight:bold;color:#fff;letter-spacing:0.6px;-webkit-text-stroke:0.3px #fff;">Input:</div>
<div class="t" style="top:741.81px;font-size:14.66px;left:1228.03px;font-family:'Liberation Mono',monospace;color:#fff;">inputString: "name"</div>
<div class="t" style="top:775.23px;font-size:14px;left:1076.35px;font-weight:bold;color:#fff;letter-spacing:0.6px;-webkit-text-stroke:0.3px #fff;">Output:</div>
<div class="t" style="top:774.45px;font-size:14.66px;left:1228.03px;font-family:'Liberation Mono',monospace;color:#fff;">"v"</div>
<div class="t" style="top:806.43px;font-size:14px;left:1076.35px;font-weight:bold;color:#fff;letter-spacing:0.56px;-webkit-text-stroke:0.3px #fff;">Expected Output:</div>
<div class="t" style="top:805.74px;font-size:14.66px;left:1228.03px;font-family:'Liberation Mono',monospace;color:#fff;">"mznv"</div>
<div class="b" style="left:1075.58px;top:833.28px;width:88.32px;height:23.04px;background:#144de4;border-radius:2px;"></div>
<div class="t" style="top:835.68px;font-size:11.6px;left:1086.72px;font-weight:bold;color:#fff;letter-spacing:0.72px;-webkit-text-stroke:0.4px #fff;">VIEW DIFF</div>
<div class="t" style="top:871.42px;font-size:14px;left:1076.35px;font-weight:bold;color:#fff;letter-spacing:0.56px;-webkit-text-stroke:0.3px #fff;">Console Output:</div>
<div class="t" style="top:870.83px;font-size:14.66px;left:1228.03px;font-family:'Liberation Mono',monospace;color:#fff;"><i>Empty</i></div>
<div class="b" style="left:0px;top:0px;width:1920px;height:38.02px;background:#31435a;"></div>
<svg class="b" style="left:16.24px;top:12.39px;" width="9" height="14" viewBox="0 0 9 14"><path d="M7 1.5L2 7l5 5.5" fill="none" stroke="#fff" stroke-width="2.2" stroke-linecap="round" stroke-linejoin="round"/></svg>
<div class="t" style="top:10.08px;font-size:11.6px;left:37.44px;font-weight:bold;color:#fff;letter-spacing:0.55px;-webkit-text-stroke:0.55px #fff;">BACK</div>
<div class="t" style="top:9.37px;font-size:16.4px;left:903.55px;font-weight:bold;color:#fff;letter-spacing:0.32px;">Reflect String</div>
<svg class="b" style="left:1760.15px;top:10.07px;" width="15" height="17.5" viewBox="0 0 16 18"><path d="M8 2.400C5.400 2.400 4.500 4.700 4.500 7v3.800L2.300 13v.400h11.400V13l-2.200-2.200V7c0-2.300-.900-4.600-3.500-4.600z" fill="none" stroke="#fff" stroke-width="2.300" stroke-linejoin="round"/><path d="M6 15.300a2.100 2.100 0 0 0 4 0z" fill="#fff"/><circle cx="8" cy="1.500" r="1.100" fill="#fff"/></svg>
<svg class="b" style="left:1815.8px;top:8.51px;" width="21" height="21" viewBox="0 0 24 24"><circle cx="12" cy="12" r="10" fill="none" stroke="#fff" stroke-width="2.800"/><text x="12" y="17.600" text-anchor="middle" font-family="Liberation Sans,sans-serif" font-weight="bold" font-size="15.500" fill="#fff">?</text></svg>
<div class="b" style="left:1876.03px;top:3.07px;width:31.87px;height:31.87px;background:#fff;border-radius:50%;"></div>
<div class="b" style="left:1878.72px;top:5.76px;width:26.5px;height:26.5px;background:#d318c6;border-radius:50%;"></div>
<div class="t" style="top:10.55px;font-size:9.4px;left:1886.02px;font-weight:bold;color:#fde3fa;letter-spacing:0.3px;">SI</div>
<div class="b" style="left:0px;top:38.02px;width:46.08px;height:857.66px;background:#1e2431;"></div>
<div class="b" style="left:0px;top:38.02px;width:45.31px;height:48px;background:#144de4;"></div>
<svg class="b" style="left:13.08px;top:52.38px;" width="18" height="21" viewBox="0 0 18 21"><path d="M3.2 1.3h7.3l5.200 5.200v11.600a1.700 1.700 0 0 1-1.700 1.700H3.200a1.700 1.700 0 0 1-1.700-1.700V3a1.700 1.700 0 0 1 1.700-1.700z" fill="none" stroke="#fff" stroke-width="2.200" stroke-linejoin="round"/><path d="M10 1.200l5.800 5.800H10z" fill="#fff"/><path d="M4.800 11.700h8.400M4.800 15.700h8.400" stroke="#fff" stroke-width="2"/></svg>
<svg class="b" style="left:10.77px;top:99.78px;" width="23" height="22" viewBox="0 0 23 22"><path d="M2.6 1.4h17.8a1.4 1.4 0 0 1 1.4 1.4v12a1.4 1.4 0 0 1-1.4 1.4H8.2l-4.4 4v-4H2.6a1.4 1.4 0 0 1-1.4-1.4v-12a1.4 1.4 0 0 1 1.4-1.4z" fill="none" stroke="#fff" stroke-width="2.300" stroke-linejoin="round"/><path d="M6 12.4l3.2-.6 6.4-6.4-2.4-2.4-6.4 6.4z" fill="#fff"/><path d="M12.5 12.2h5.2" stroke="#fff" stroke-width="1.8"/></svg>
<svg class="b" style="left:12.08px;top:152.28px;" width="20" height="13" viewBox="0 0 20 13"><path d="M6.6 1.4L1.6 6.5l5 5.1M13.4 1.4l5 5.1-5 5.1" fill="none" stroke="#fff" stroke-width="2.600" stroke-linejoin="miter"/></svg>
<svg class="b" style="left:11.39px;top:196.86px;" width="21" height="21" viewBox="0 0 24 24"><circle cx="12" cy="12" r="10" fill="none" stroke="#fff" stroke-width="2.500"/><rect x="10.8" y="10.6" width="2.4" height="7" fill="#fff"/><circle cx="12" cy="7.4" r="1.5" fill="#fff"/></svg>
<svg class="b" style="left:10.33px;top:860.7px;" width="23.5" height="23.5" viewBox="0 0 24 24"><g fill="none" stroke="#fff" stroke-width="2.2" stroke-linejoin="round"><path d="M10.3 1.8h3.4l.6 2.7 1.7.9 2.6-.9 1.7 2.9-2 1.9v1.9l2 1.9-1.7 2.9-2.6-.9-1.7.9-.6 2.7h-3.4l-.6-2.7-1.7-.9-2.6.9-1.7-2.9 2-1.9v-1.9l-2-1.9 1.7-2.9 2.6.9 1.7-.9z" transform="translate(0 1.4)"/><circle cx="12" cy="12" r="3"/></g></svg>
<div class="b" style="left:1029.7px;top:38.02px;width:9.02px;height:857.66px;background:#fbfbfc;"></div>
<div class="b" style="left:1030.27px;top:38.02px;width:8.45px;height:825.02px;background:linear-gradient(to right,#d4d7dc,#b4b8c0 45%,#8f96a1);"></div>
<div class="b" style="left:1035.26px;top:449.66px;width:8.06px;height:37.25px;background:#272e3b;border:1.6px solid #10151d;border-radius:3px;"></div>
<div class="b" style="left:0px;top:895.68px;width:1920px;height:37.44px;background:#1e2431;"></div>
<div class="b" style="left:6.14px;top:903.94px;width:67.58px;height:24.58px;background:#222a37;border-radius:2px;"></div>
<div class="b" style="left:15.36px;top:909.31px;width:1.92px;height:1.92px;background:#8a92a0;border-radius:50%;"></div>
<div class="b" style="left:15.36px;top:915.26px;width:1.92px;height:1.92px;background:#8a92a0;border-radius:50%;"></div>
<div class="b" style="left:15.36px;top:921.22px;width:1.92px;height:1.92px;background:#8a92a0;border-radius:50%;"></div>
<div class="t" style="top:907.1px;font-size:11.6px;left:28.8px;font-weight:bold;color:#fff;letter-spacing:0.65px;-webkit-text-stroke:0.4px #fff;">MORE</div>
<svg class="b" style="left:80.72px;top:908.36px;" width="17.5" height="16.5" viewBox="0 0 19 19"><path d="M1 9h3.4v9H1zM6 18h8.2c.8 0 1.4-.5 1.7-1.200l2-5.400c.5-1.300-.400-2.600-1.800-2.600h-4.300l.7-3.700c.2-1.100-.300-2.100-1.300-2.600L10.500 2 6 8.500z" fill="#fff"/></svg>
<div class="t" style="top:906.49px;font-size:14.2px;left:106.75px;font-weight:bold;color:#fff;letter-spacing:0.5px;">91</div>
<svg class="b" style="left:127.95px;top:909.51px;transform:rotate(180deg) scaleX(-1);" width="17.5" height="16.5" viewBox="0 0 19 19"><path d="M1 9h3.4v9H1zM6 18h8.2c.8 0 1.4-.5 1.7-1.200l2-5.400c.5-1.300-.400-2.600-1.800-2.600h-4.300l.7-3.700c.2-1.100-.300-2.100-1.300-2.600L10.500 2 6 8.500z" fill="#fff"/></svg>
<div class="t" style="top:906.49px;font-size:14.2px;left:153.6px;font-weight:bold;color:#fff;letter-spacing:0.5px;">12</div>
<div class="t" style="top:907.33px;font-size:14px;left:1681.34px;font-family:'DejaVu Sans','Liberation Sans',sans-serif;font-weight:bold;color:#fff;letter-spacing:0.55px;">0/300</div>
<div class="b" style="left:1736.83px;top:903.94px;width:86.78px;height:24.58px;background:#232a37;border-radius:2px;"></div>
<div class="t" style="top:907.39px;font-size:11.6px;left:1749.12px;font-weight:bold;color:#fff;letter-spacing:0.6px;-webkit-text-stroke:0.4px #fff;">VIEW DIFF</div>
<div class="b" style="left:1835.14px;top:904.32px;width:69.31px;height:24.38px;background:#1e866f;border-radius:2px;"></div>
<div class="t" style="top:907.39px;font-size:11.6px;left:1845.31px;font-weight:bold;color:#fff;letter-spacing:0.72px;-webkit-text-stroke:0.4px #fff;">SUBMIT</div>
</div>
</body></html>
